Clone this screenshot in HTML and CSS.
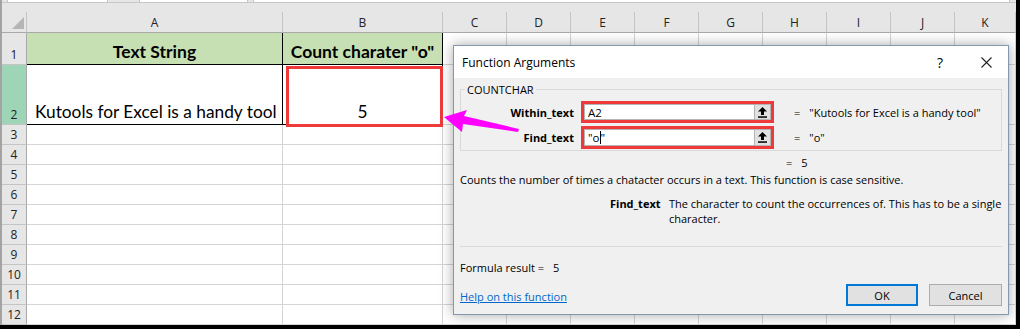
FILE: index.html
```
<!DOCTYPE html>
<html lang="en">
<head>
    <meta charset="UTF-8">
    <meta name="viewport" content="width=device-width, initial-scale=1.0">
    <title>Function Arguments</title>
    <link rel="stylesheet" href="styles.css">
</head>
<body>
<div id="window">
    <div id="sheet">
        <div class="ribbon">
            <span class="fbox namebox"></span>
            <span class="fbox fxbox"></span>
            <span class="fbox formulabox"></span>
        </div>
        <div id="grid">
            <div class="colhead corner"><span class="tri"></span></div>
            <div class="colhead">A</div>
            <div class="colhead">B</div>
            <div class="colhead">C</div>
            <div class="colhead">D</div>
            <div class="colhead">E</div>
            <div class="colhead">F</div>
            <div class="colhead">G</div>
            <div class="colhead">H</div>
            <div class="colhead">I</div>
            <div class="colhead">J</div>
            <div class="colhead">K</div>

            <div class="rowhead tall">1</div>
            <div class="cell title">Text String</div>
            <div class="cell title">Count charater "o"</div>
            <div class="cell"></div><div class="cell"></div><div class="cell"></div>
            <div class="cell"></div><div class="cell"></div><div class="cell"></div>
            <div class="cell"></div><div class="cell"></div><div class="cell"></div>

            <div class="rowhead tall sel">2</div>
            <div class="cell data">Kutools for Excel is a handy tool</div>
            <div class="cell data num pick">5</div>
            <div class="cell"></div><div class="cell"></div><div class="cell"></div>
            <div class="cell"></div><div class="cell"></div><div class="cell"></div>
            <div class="cell"></div><div class="cell"></div><div class="cell"></div>
        </div>
    </div>

    <div class="dialog">
        <div class="dlg-title">
            <span class="dlg-name">Function Arguments</span>
            <span class="dlg-help">?</span>
            <svg class="dlg-close" width="11" height="11" viewBox="0 0 11 11">
                <path d="M0.5 0.5 L10.5 10.5 M10.5 0.5 L0.5 10.5" stroke="#222" stroke-width="1.1" fill="none"/>
            </svg>
        </div>
        <div class="dlg-body">
            <fieldset class="group">
                <legend>COUNTCHAR</legend>
                <div class="args">
                    <div class="arg-label">Within_text</div>
                    <div class="argbox">
                        <div class="field">A2</div>
                        <div class="pickbtn">
                            <svg width="9" height="11" viewBox="0 0 9 11"><path d="M4.5 0 L9 4.5 H6 V8 H3 V4.5 H0 Z" fill="#000"/><rect x="0" y="9.3" width="9" height="1.5" fill="#000"/></svg>
                        </div>
                    </div>
                    <div class="arg-value"><span class="eq">=</span>"Kutools for Excel is a handy tool"</div>

                    <div class="arg-label">Find_text</div>
                    <div class="argbox">
                        <div class="field">"o<span class="caret"></span>"</div>
                        <div class="pickbtn">
                            <svg width="9" height="11" viewBox="0 0 9 11"><path d="M4.5 0 L9 4.5 H6 V8 H3 V4.5 H0 Z" fill="#000"/><rect x="0" y="9.3" width="9" height="1.5" fill="#000"/></svg>
                        </div>
                    </div>
                    <div class="arg-value"><span class="eq">=</span>"o"</div>
                </div>
            </fieldset>

            <div class="result"><span class="eq">=</span>5</div>
            <div class="desc">Counts the number of times a chatacter occurs in a text. This function is case sensitive.</div>
            <div class="argdesc">
                <span class="argdesc-name">Find_text</span>
                <span class="argdesc-text">The character to count the occurrences of. This has to be a single character.</span>
            </div>
            <div class="sep"></div>
            <div class="formula-result">Formula result =<span class="fr-value">5</span></div>
            <div class="dlg-foot">
                <a class="help-link" href="#">Help on this function</a>
                <button class="dbtn ok">OK</button>
                <button class="dbtn">Cancel</button>
            </div>
        </div>
    </div>

    <svg class="pointer" width="1020" height="329" viewBox="0 0 1020 329">
        <polygon points="444,117 467,110 464,116 519,129 518,132 463,124 462,132" fill="#f0f"/>
    </svg>
</div>
<script>
    // rows 3 - 12 are empty, build them
    const grid = document.querySelector("#grid");
    for (let r = 3; r <= 12; r++) {
        let head = document.createElement("div");
        head.classList.add("rowhead");
        head.innerHTML = r;
        grid.appendChild(head);
        for (let c = 0; c < 11; c++) {
            let cell = document.createElement("div");
            cell.classList.add("cell");
            grid.appendChild(cell);
        }
    }
</script>
</body>
</html>
```

FILE: styles.css
```
* {
    box-sizing: border-box;
}
body {
    margin: 0;
    background-color: #000;
    font-family: "Open Sans", "Noto Sans", sans-serif;
}
#window {
    position: relative;
    width: 1020px;
    height: 329px;
    overflow: hidden;
}
#sheet {
    width: 1016px;
    height: 325px;
    background-color: #fff;
    border-left: 2px solid #a3a3a3;
}

/* strip above the column letters */
.ribbon {
    height: 12px;
    display: flex;
    align-items: flex-start;
    background: linear-gradient(#c9c9c9, #c9c9c9) 0 2px / 100% 1px no-repeat, #e6e6e6;
}
.fbox {
    height: 3px;
    background-color: #fff;
    border: 1px solid #c6c6c6;
    border-top: none;
}
.namebox { margin-left: 5px; width: 101px; }
.fxbox { margin-left: 31px; width: 109px; }
.formulabox { margin-left: 5px; width: 757px; }

#grid {
    display: grid;
    grid-template-columns: 25px 256px 160px repeat(8, 64px) 61px;
    grid-template-rows: 21px 32px 60px repeat(10, 20px);
}
.colhead {
    background-color: #e6e6e6;
    border-right: 1px solid #c4c4c4;
    border-bottom: 1px solid #a9a9a9;
    font-size: 12px;
    color: #222;
    display: flex;
    align-items: center;
    justify-content: center;
}
.corner {
    position: relative;
}
.tri {
    position: absolute;
    right: 2px;
    bottom: 3px;
    width: 0;
    height: 0;
    border-left: 12px solid transparent;
    border-bottom: 12px solid #b5b5b5;
}
.rowhead {
    background-color: #e6e6e6;
    border-right: 1px solid #a9a9a9;
    border-bottom: 1px solid #c4c4c4;
    font-size: 12px;
    color: #222;
    display: flex;
    align-items: center;
    justify-content: center;
}
.rowhead.tall {
    align-items: flex-end;
    padding-bottom: 1px;
}
.rowhead.sel {
    background-color: #9fd5b7;
}
.cell {
    border-right: 1px solid #d4d4d4;
    border-bottom: 1px solid #d4d4d4;
}
.cell.title {
    background-color: #c6e0b4;
    border-color: #000;
    font-family: Lato, sans-serif;
    font-weight: bold;
    font-size: 17.5px;
    display: flex;
    align-items: flex-end;
    justify-content: center;
    padding-bottom: 2px;
}
.cell.data {
    border-color: #000;
    font-family: Lato, sans-serif;
    font-size: 17.3px;
    display: flex;
    align-items: flex-end;
    padding: 0 0 2px 8px;
}
.cell.num {
    justify-content: center;
    padding-left: 0;
}
.pick {
    position: relative;
}
.pick::after {
    content: "";
    position: absolute;
    left: 3px;
    top: 1px;
    right: -1px;
    bottom: -3px;
    border: 3px solid #ee3a3a;
}

/* dialog */
.dialog {
    position: absolute;
    left: 453px;
    top: 45px;
    width: 556px;
    height: 270px;
    background-color: #f0f0f0;
    border: 1px solid #8397ae;
    box-shadow: 0 0 12px rgba(0, 0, 0, 0.35);
    font-size: 11px;
    color: #000;
}
.dlg-title {
    height: 32px;
    background-color: #fff;
    display: flex;
    align-items: center;
    padding-left: 8px;
    font-size: 12px;
}
.dlg-name {
    flex: 1;
}
.dlg-help {
    font-size: 14px;
    margin-right: 38px;
}
.dlg-close {
    margin-right: 16px;
}
.dlg-body {
    padding: 0 6px 0 6px;
}
.group {
    margin: 4px 0 0 0;
    padding: 0 0 0 0;
    border: 1px solid #d9d9d9;
    height: 69px;
}
.group legend {
    margin-left: 4px;
    padding: 0 2px;
    font-size: 11px;
}
.args {
    display: grid;
    grid-template-columns: 113px 193px 1fr;
    grid-template-rows: 22px 23px;
    column-gap: 7px;
    row-gap: 3px;
    padding-top: 4px;
}
.arg-label {
    font-weight: bold;
    text-align: right;
    display: flex;
    align-items: center;
    justify-content: flex-end;
}
.argbox {
    border: 3px solid #ee3a3a;
    background-color: #fff;
    display: flex;
}
.field {
    flex: 1;
    border: 1px solid #b4b4b4;
    border-right: none;
    padding-left: 3px;
    display: flex;
    align-items: center;
    font-size: 11.5px;
}
.caret {
    display: inline-block;
    width: 1px;
    height: 13px;
    background-color: #000;
}
.pickbtn {
    width: 17px;
    background-color: #e1e1e1;
    border: 1px solid #b4b4b4;
    display: flex;
    align-items: center;
    justify-content: center;
}
.arg-value {
    display: flex;
    align-items: center;
    padding-left: 13px;
}
.eq {
    margin-right: 9px;
}
.result {
    margin-top: 4px;
    padding-left: 326px;
    line-height: 15px;
}
.desc {
    margin-top: 2px;
    line-height: 15px;
}
.argdesc {
    margin-top: 9px;
    display: flex;
    line-height: 15px;
}
.argdesc-name {
    font-weight: bold;
    margin-left: 150px;
    width: 61px;
}
.argdesc-text {
    width: 345px;
}
.sep {
    margin-top: 20px;
    height: 1px;
    background-color: #dadada;
}
.formula-result {
    margin-top: 13px;
    line-height: 15px;
}
.fr-value {
    margin-left: 9px;
}
.dlg-foot {
    margin-top: 9px;
    display: flex;
    align-items: center;
}
.help-link {
    flex: 1;
    color: #0066cc;
    padding-top: 2px;
}
.dbtn {
    width: 73px;
    height: 22px;
    margin-left: 11px;
    border: 1px solid #adadad;
    background-color: #e1e1e1;
    font-family: "Open Sans", "Noto Sans", sans-serif;
    font-size: 11px;
    padding: 0;
}
.dbtn.ok {
    width: 72px;
    margin-left: 0;
    border: 2px solid #0078d7;
}
.pointer {
    position: absolute;
    left: 0;
    top: 0;
    pointer-events: none;
}
```
